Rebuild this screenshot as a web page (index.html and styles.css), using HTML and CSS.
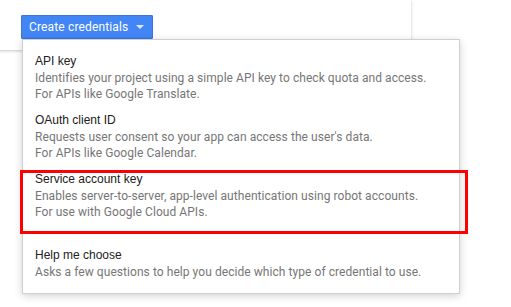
FILE: index.html
```html
<!DOCTYPE html>
<html>
<head>
<meta charset="utf-8">
<link rel="stylesheet" href="styles.css">
</head>
<body>
<div class="card">
  <div class="dropdown">
    <button class="btn">Create credentials<span class="caret"></span></button>
    <div class="menu">
      <div class="item">
        <div class="title">API key</div>
        <div class="desc">Identifies your project using a simple API key to check quota and access.<br>For APIs like Google Translate.</div>
      </div>
      <div class="item">
        <div class="title">OAuth client ID</div>
        <div class="desc">Requests user consent so your app can access the user's data.<br>For APIs like Google Calendar.</div>
      </div>
      <div class="item">
        <div class="title">Service account key</div>
        <div class="desc">Enables server-to-server, app-level authentication using robot accounts.<br>For use with Google Cloud APIs.</div>
      </div>
      <div class="item help">
        <div class="title">Help me choose</div>
        <div class="desc">Asks a few questions to help you decide which type of credential to use.</div>
      </div>
      <div class="highlight"></div>
    </div>
  </div>
</div>
</body>
</html>
```
FILE: styles.css
```css
html, body {
  margin: 0;
  padding: 0;
  background: #fff;
}
body {
  font-family: Roboto, "Liberation Sans", sans-serif;
  font-size: 12px;
  width: 511px;
  height: 307px;
  overflow: hidden;
}
.card {
  margin-left: -8px;
  width: 419px;
  height: 50px;
  background: #fff;
  box-shadow: 0 1px 3px rgba(0, 0, 0, 0.22);
  padding-top: 15px;
  box-sizing: border-box;
}
.dropdown {
  position: relative;
  margin-left: 29px;
  width: 132px;
}
.btn {
  display: flex;
  align-items: center;
  height: 24px;
  width: 132px;
  box-sizing: border-box;
  padding: 0 0 0 7px;
  background: #4285f4;
  border: 1px solid #3b74dc;
  border-radius: 1px;
  color: #fff;
  font-family: Roboto, "Liberation Sans", sans-serif;
  font-size: 12px;
  line-height: 16px;
  letter-spacing: 0.15px;
}
.caret {
  display: inline-block;
  width: 0;
  height: 0;
  margin-left: 8px;
  border-left: 4.5px solid transparent;
  border-right: 4.5px solid transparent;
  border-top: 4px solid #dfe8fc;
}
.menu {
  position: absolute;
  top: 24px;
  left: 1px;
  width: 438px;
  box-sizing: border-box;
  background: #fff;
  border: 1px solid #cfcfcf;
  box-shadow: 0 2px 8px rgba(0, 0, 0, 0.18);
  padding: 8px 0;
  z-index: 2;
}
.item {
  padding: 5px 12px;
  white-space: nowrap;
}
.title {
  font-family: "Liberation Sans", Arial, sans-serif;
  font-size: 12px;
  color: #212121;
  line-height: 17px;
}
.desc {
  color: #767676;
  line-height: 16px;
  letter-spacing: 0.06px;
}
.help {
  margin-top: 17px;
}
.highlight {
  position: absolute;
  left: -3px;
  top: 130px;
  width: 448px;
  height: 64px;
  box-sizing: border-box;
  border: 3px solid #ff0000;
}
```
